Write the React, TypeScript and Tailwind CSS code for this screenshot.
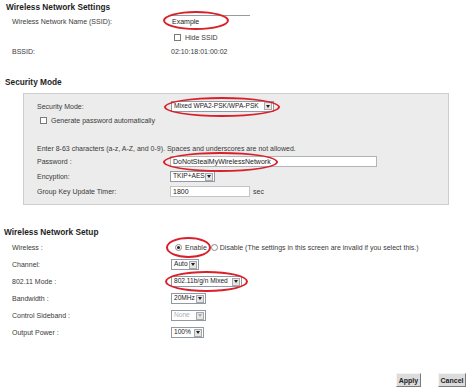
import React from 'react';

const Arrow: React.FC<{ disabled?: boolean }> = ({ disabled }) => (
  <span className="mr-[1px] flex h-[8px] w-[8px] shrink-0 items-center justify-center border border-[#a8a8a8] bg-[#e6e6e6]">
    <svg width="4" height="3" viewBox="0 0 4 3">
      <polygon points="0,0 4,0 2,3" fill={disabled ? '#aaaaaa' : '#222222'} />
    </svg>
  </span>
);

const Select: React.FC<{ value: string; w: string; disabled?: boolean }> = ({ value, w, disabled }) => (
  <div className={`flex h-[11px] items-center border border-[#8f9aa5] bg-white ${w}`}>
    <span className={`min-w-0 flex-1 overflow-hidden whitespace-nowrap pl-[2px] text-[6.6px] leading-none ${disabled ? 'text-[#b0b0b0]' : 'text-[#222]'}`}>{value}</span>
    <Arrow disabled={disabled} />
  </div>
);

const Check: React.FC = () => (
  <span className="inline-block h-[7px] w-[7px] border border-[#7a7a7a] bg-white" />
);

const Radio: React.FC<{ on?: boolean }> = ({ on }) => (
  <span className="flex h-[7px] w-[7px] items-center justify-center rounded-full border border-[#8a8a8a] bg-white">
    {on && <span className="h-[3px] w-[3px] rounded-full bg-[#222]" />}
  </span>
);

const Ring: React.FC<{ cls: string }> = ({ cls }) => (
  <div className={`pointer-events-none absolute rounded-[50%] border-2 border-[#d9202a] ${cls}`} />
);

const Row: React.FC<{ label: string; h: string; lw: string; children?: React.ReactNode }> = ({ label, h, lw, children }) => (
  <div className={`flex items-center ${h}`}>
    <div className={`shrink-0 pl-[12px] ${lw}`}>{label}</div>
    {children}
  </div>
);

export default function App() {
  return (
    <div className="relative h-[392px] w-[474px] overflow-hidden bg-white text-[7px] leading-none text-[#3a3a3a] [font-family:'Liberation_Sans',Arial,sans-serif]">
      {/* Wireless Network Settings */}
      <div className="flex h-[14px] items-center pl-[6px] text-[8.3px] font-bold text-[#1e1e1e]">Wireless Network Settings</div>
      <Row label="Wireless Network Name (SSID):" h="h-[14px]" lw="w-[170px]">
        <div className="flex h-[12px] w-[80px] items-center border-t border-[#9a9a9a] pl-[2px] text-[#222]">Example</div>
      </Row>
      <div className="mt-[2px] flex h-[14px] items-center gap-[4px] pl-[174px]">
        <Check />
        <span>Hide SSID</span>
      </div>
      <Row label="BSSID:" h="h-[15px]" lw="w-[171px]">
        <span>02:10:18:01:00:02</span>
      </Row>

      {/* Security Mode */}
      <div className="mt-[16px] flex h-[14px] items-center pl-[5px] text-[8.3px] font-bold text-[#1e1e1e]">Security Mode</div>
      <div className="ml-[23px] mt-[4px] h-[112px] w-[426px] border border-[#cdcdcd] bg-[#ececec] pt-[5px]">
        <div className="flex h-[14px] items-center">
          <div className="w-[147px] shrink-0 pl-[13px]">Security Mode:</div>
          <Select value="Mixed WPA2-PSK/WPA-PSK" w="w-[103px]" />
        </div>
        <div className="flex h-[14px] items-center gap-[4px] pl-[16px]">
          <Check />
          <span>Generate password automatically</span>
        </div>
        <div className="mt-[15px] flex h-[12px] items-center pl-[13px]">
          Enter 8-63 characters (a-z, A-Z, and 0-9). Spaces and underscores are not allowed.
        </div>
        <div className="flex h-[15px] items-center">
          <div className="w-[146px] shrink-0 pl-[13px]">Password :</div>
          <div className="flex h-[11px] w-[207px] items-center border border-[#b4b4b4] bg-white pl-[2px] text-[#222]">DoNotStealMyWirelessNetwork</div>
        </div>
        <div className="flex h-[15px] items-center">
          <div className="w-[146px] shrink-0 pl-[13px]">Encyption:</div>
          <Select value="TKIP+AES" w="w-[45px]" />
        </div>
        <div className="flex h-[15px] items-center">
          <div className="w-[146px] shrink-0 pl-[13px]">Group Key Update Timer:</div>
          <div className="flex h-[11px] w-[80px] items-center border border-[#c4c4c4] bg-white pl-[2px] text-[#222]">1800</div>
          <span className="ml-[3px]">sec</span>
        </div>
      </div>

      {/* Wireless Network Setup */}
      <div className="mt-[21px] flex h-[13px] items-center pl-[4px] text-[8.3px] font-bold text-[#1e1e1e]">Wireless Network Setup</div>
      <Row label="Wireless :" h="h-[17px]" lw="w-[175px]">
        <Radio on />
        <span className="ml-[3px]">Enable</span>
        <span className="ml-[4px]"><Radio /></span>
        <span className="ml-[2px]">Disable (The settings in this screen are invalid if you select this.)</span>
      </Row>
      <Row label="Channel:" h="h-[17px]" lw="w-[171px]">
        <Select value="Auto" w="w-[28px]" />
      </Row>
      <Row label="802.11 Mode :" h="h-[17px]" lw="w-[171px]">
        <Select value="802.11b/g/n Mixed" w="w-[71px]" />
      </Row>
      <Row label="Bandwidth :" h="h-[17px]" lw="w-[171px]">
        <Select value="20MHz" w="w-[35px]" />
      </Row>
      <Row label="Control Sideband :" h="h-[17px]" lw="w-[171px]">
        <Select value="None" w="w-[35px]" disabled />
      </Row>
      <Row label="Output Power :" h="h-[17px]" lw="w-[171px]">
        <Select value="100%" w="w-[33px]" />
      </Row>

      <div className="mt-[32px] flex h-[14px] justify-end gap-[17px] pr-[8px]">
        <button className="h-[14px] w-[25px] border border-t-[#f4f4f4] border-l-[#f4f4f4] border-b-[#7a7a7a] border-r-[#7a7a7a] bg-[#dcdcdc] text-[7px] font-bold text-[#222]">Apply</button>
        <button className="h-[14px] w-[28px] border border-t-[#f4f4f4] border-l-[#f4f4f4] border-b-[#7a7a7a] border-r-[#7a7a7a] bg-[#dcdcdc] text-[7px] font-bold text-[#222]">Cancel</button>
      </div>

      <Ring cls="left-[163px] top-[11px] h-[19px] w-[66px]" />
      <Ring cls="left-[164px] top-[97px] h-[20px] w-[116px]" />
      <Ring cls="left-[163px] top-[152px] h-[20px] w-[115px]" />
      <Ring cls="left-[166px] top-[237px] h-[21px] w-[45px]" />
      <Ring cls="left-[165px] top-[271px] h-[21px] w-[83px]" />
    </div>
  );
}
